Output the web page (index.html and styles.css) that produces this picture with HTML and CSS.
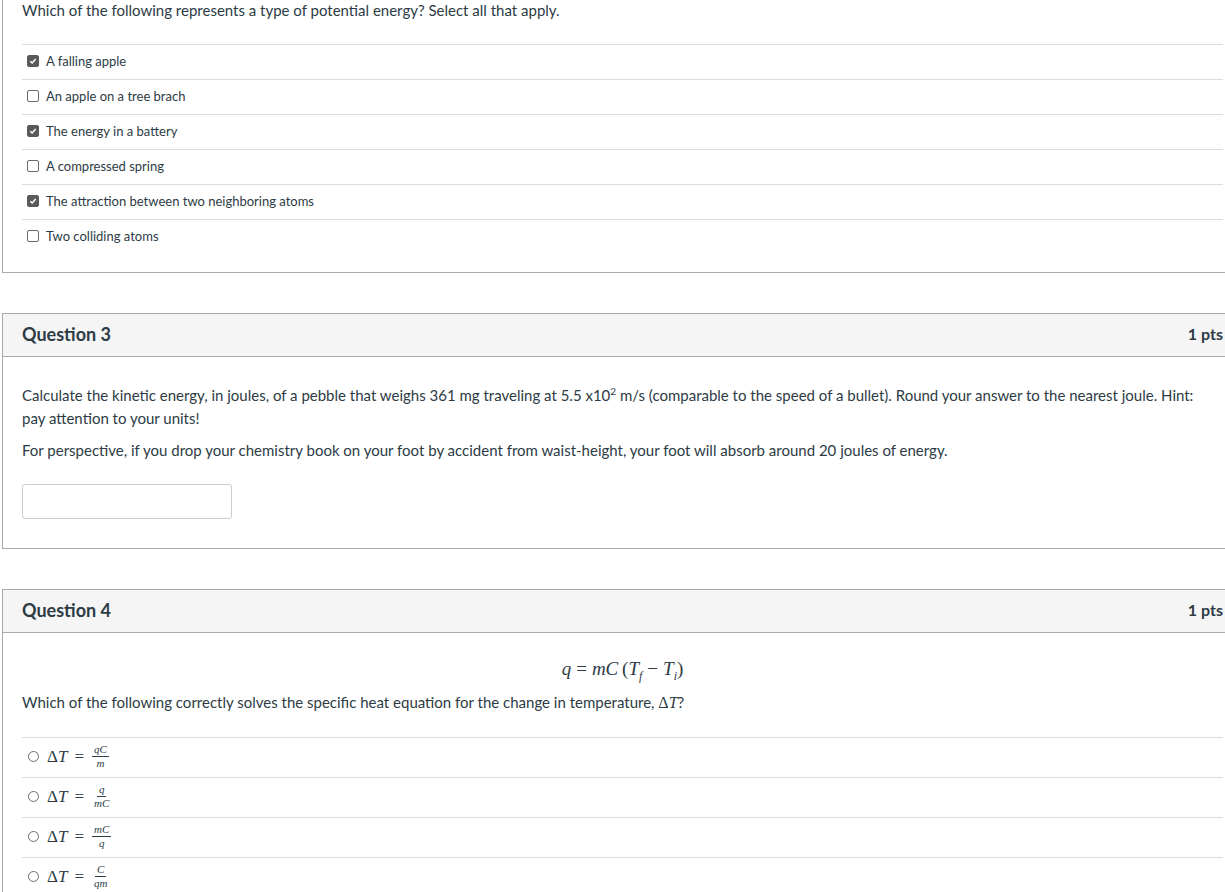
FILE: index.html
```html
<!DOCTYPE html>
<html>
<head>
<meta charset="utf-8">
<link rel="stylesheet" href="styles.css">
</head>
<body>
<div class="page">
  <div class="card card-cut">
    <div class="body body-first">
      <p class="q">Which of the following represents a type of potential energy? Select all that apply.</p>
      <div class="answers">
        <div class="ans"><span class="cb checked"><svg viewBox="0 0 12 12" width="12" height="12"><path d="M2.8 6.2 L5 8.4 L9.2 3.6" fill="none" stroke="#fff" stroke-width="1.8"/></svg></span>A falling apple</div>
        <div class="ans"><span class="cb"></span>An apple on a tree brach</div>
        <div class="ans"><span class="cb checked"><svg viewBox="0 0 12 12" width="12" height="12"><path d="M2.8 6.2 L5 8.4 L9.2 3.6" fill="none" stroke="#fff" stroke-width="1.8"/></svg></span>The energy in a battery</div>
        <div class="ans"><span class="cb"></span>A compressed spring</div>
        <div class="ans"><span class="cb checked"><svg viewBox="0 0 12 12" width="12" height="12"><path d="M2.8 6.2 L5 8.4 L9.2 3.6" fill="none" stroke="#fff" stroke-width="1.8"/></svg></span>The attraction between two neighboring atoms</div>
        <div class="ans"><span class="cb"></span>Two colliding atoms</div>
      </div>
    </div>
  </div>

  <div class="card">
    <div class="header"><span class="title">Question 3</span><span class="pts">1 pts</span></div>
    <div class="body body-q3">
      <p class="para">Calculate the kinetic energy, in joules, of a pebble that weighs 361 mg traveling at 5.5 x10<sup>2</sup> m/s (comparable to the speed of a bullet). Round your answer to the nearest joule. Hint: pay attention to your units!</p>
      <p class="para">For perspective, if you drop your chemistry book on your foot by accident from waist-height, your foot will absorb around 20 joules of energy.</p>
      <div class="input"></div>
    </div>
  </div>

  <div class="card">
    <div class="header"><span class="title">Question 4</span><span class="pts">1 pts</span></div>
    <div class="body body-q4">
      <div class="formula math"><i>q</i><span class="op">=</span><i>mC</i>&#8201;(<i>T</i><sub><i>f</i></sub><span class="op">&minus;</span><i>T</i><sub><i>i</i></sub>)</div>
      <p class="para">Which of the following correctly solves the specific heat equation for the change in temperature, <span class="math">&Delta;<i>T</i></span>?</p>
      <div class="answers answers-radio">
        <div class="ans ans-r"><span class="rb"></span><span class="math eq">&Delta;<i>T</i><span class="op">=</span><span class="frac"><span class="num"><i>qC</i></span><span class="den"><i>m</i></span></span></span></div>
        <div class="ans ans-r"><span class="rb"></span><span class="math eq">&Delta;<i>T</i><span class="op">=</span><span class="frac"><span class="num"><i>q</i></span><span class="den"><i>mC</i></span></span></span></div>
        <div class="ans ans-r"><span class="rb"></span><span class="math eq">&Delta;<i>T</i><span class="op">=</span><span class="frac"><span class="num"><i>mC</i></span><span class="den"><i>q</i></span></span></span></div>
        <div class="ans ans-r"><span class="rb"></span><span class="math eq">&Delta;<i>T</i><span class="op">=</span><span class="frac"><span class="num"><i>C</i></span><span class="den"><i>qm</i></span></span></span></div>
      </div>
    </div>
  </div>
</div>
</body>
</html>
```
FILE: styles.css
```css
html, body {
  margin: 0;
  padding: 0;
  background: #fff;
  overflow: hidden;
}
body {
  font-family: Lato, "Open Sans", sans-serif;
  color: #2d3b45;
  width: 1225px;
  height: 892px;
}
.page {
  padding-left: 2px;
  width: 1240px;
}
.card {
  border: 1px solid #a9a9a9;
  margin-top: 40px;
}
.card-cut {
  border-top: none;
  margin-top: 0;
}
.header {
  height: 43px;
  background: #f5f5f5;
  border-bottom: 1px solid #a9a9a9;
  display: flex;
  align-items: center;
  justify-content: space-between;
  padding: 0 18px 3px 19px;
  box-sizing: border-box;
}
.title {
  font-size: 18px;
  font-weight: 700;
}
.pts {
  font-size: 16px;
  font-weight: 700;
}
.body {
  padding: 0 0 0 19px;
}
.body-first {
  padding-bottom: 18px;
}
.q {
  margin: 0;
  font-size: 15px;
  line-height: 20px;
  padding-bottom: 24px;
}
.answers {
  width: 1201px;
}
.ans {
  display: flex;
  align-items: center;
  height: 35px;
  border-top: 1px solid #dcdcdc;
  font-size: 13px;
  padding-left: 5px;
  padding-bottom: 3px;
  box-sizing: border-box;
}
.cb {
  width: 10px;
  height: 10px;
  border: 1px solid #6b6b6b;
  border-radius: 2px;
  margin-right: 7px;
  display: flex;
  align-items: center;
  justify-content: center;
  background: #fff;
}
.cb.checked {
  background: #5a5a5a;
  border-color: #5a5a5a;
}
.cb svg {
  display: block;
}
.body-q3 {
  padding-top: 27px;
  padding-bottom: 29px;
}
.para {
  margin: 0 0 9px 0;
  font-size: 15px;
  line-height: 23px;
  width: 1185px;
}
.para sup {
  font-size: 10px;
  line-height: 0;
  vertical-align: 6px;
}
.input {
  margin-top: 22px;
  width: 208px;
  height: 33px;
  border: 1px solid #c7cdd1;
  border-radius: 3px;
}
.body-q4 {
  padding-top: 23px;
}
.math {
  font-family: "Liberation Serif", "DejaVu Serif", serif;
}
.formula {
  font-size: 19px;
  text-align: center;
  width: 1201px;
  line-height: 26px;
  margin-bottom: 9px;
  word-spacing: 1px;
}
.formula sub {
  font-size: 12px;
  line-height: 0;
}
.op {
  font-style: normal;
  padding: 0 5px;
}
.body-q4 .para .math {
  font-size: 16px;
}
.answers-radio {
  margin-top: 23px;
}
.ans-r {
  height: 40px;
  padding-left: 6px;
  padding-bottom: 2px;
}
.rb {
  width: 9px;
  height: 9px;
  border: 1px solid #6b6b6b;
  border-radius: 50%;
  margin-right: 8px;
}
.eq {
  font-size: 17px;
  display: flex;
  align-items: center;
}
.eq .op {
  padding: 0 7px;
}
.frac {
  display: inline-flex;
  flex-direction: column;
  align-items: center;
  font-size: 11px;
  line-height: 11px;
  margin-left: 1px;
}
.num {
  padding: 0 2px 1px;
  border-bottom: 1px solid #2d3b45;
}
.den {
  padding: 1px 2px 0;
}
```
